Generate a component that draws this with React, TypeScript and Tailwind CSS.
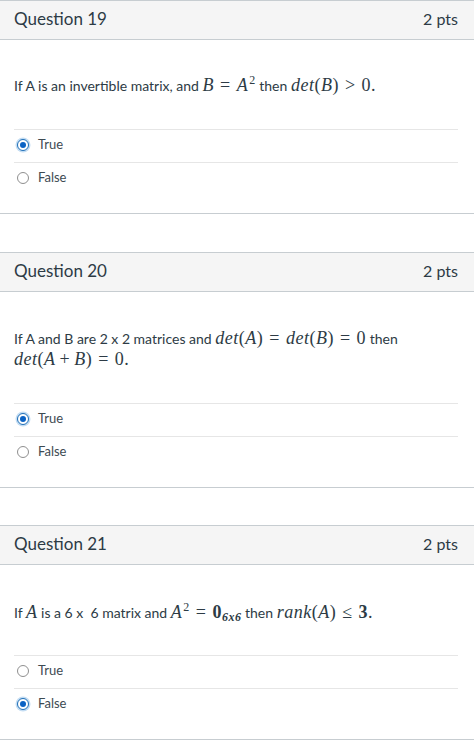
import type { ReactNode } from 'react';

type Answer = { label: string; checked: boolean };

function Radio({ checked }: { checked: boolean }) {
  if (checked) {
    return (
      <span className="flex h-[12px] w-[12px] items-center justify-center rounded-full border border-[#1f6fb8] bg-white shadow-[0_0_0_1.5px_#c4ddf3]">
        <span className="h-[6px] w-[6px] rounded-full bg-[#0b62c4]" />
      </span>
    );
  }
  return <span className="h-[12px] w-[12px] rounded-full border border-[#8f8f8f] bg-white" />;
}

function Question({
  number,
  points,
  text,
  answers,
  textClass,
}: {
  number: number;
  points: string;
  text: ReactNode;
  answers: Answer[];
  textClass: string;
}) {
  return (
    <section className="border-t border-b border-[#c7cdd1] bg-white">
      <header className="flex h-[39px] items-center justify-between border-b border-[#c7cdd1] bg-[#f5f5f5] pl-[14px] pr-[16px] pb-[2px]">
        <h2 className="text-[17px] text-[#2d3b45]">Question {number}</h2>
        <span className="text-[16px] text-[#2d3b45]">{points}</span>
      </header>
      <div className="pl-[14px] pr-[16px] pb-[18px]">
        <div className={`text-[14px] text-[#2d3b45] ${textClass}`}>{text}</div>
        <div>
          {answers.map((a) => (
            <div
              key={a.label}
              className="flex h-[33px] items-center gap-[9px] border-t border-[#e6e6e6] pb-[3px] pl-[3px]"
            >
              <Radio checked={a.checked} />
              <span className="text-[13px] text-[#3d4a52]">{a.label}</span>
            </div>
          ))}
        </div>
      </div>
    </section>
  );
}

const serif =
  "font-['Liberation_Serif','Times_New_Roman',serif] text-[18px] leading-[14px] tracking-[0.5px] whitespace-nowrap";

function I({ children }: { children: ReactNode }) {
  return <span className="italic">{children}</span>;
}

function Rel({ children }: { children: ReactNode }) {
  return <span className="mx-[6px]">{children}</span>;
}

function Sup({ children }: { children: ReactNode }) {
  return <span className="relative -top-[7px] ml-[1px] text-[12px]">{children}</span>;
}

export default function App() {
  return (
    <div className="min-h-screen bg-white font-['Lato','Liberation_Sans',sans-serif]">
      <Question
        number={19}
        points="2 pts"
        textClass="leading-[20px] pt-[36px] pb-[33px]"
        text={
          <>
            If A is an invertible matrix, and{' '}
            <span className={serif}>
              <I>B</I>
              <Rel>=</Rel>
              <I>A</I>
              <Sup>2</Sup>
            </span>{' '}
            then{' '}
            <span className={serif}>
              <I>det</I>(<I>B</I>)<Rel>&gt;</Rel>0.
            </span>
          </>
        }
        answers={[
          { label: 'True', checked: true },
          { label: 'False', checked: false },
        ]}
      />
      <div className="h-[38px]" />
      <Question
        number={20}
        points="2 pts"
        textClass="leading-[21px] pt-[36px] pb-[33px]"
        text={
          <>
            If A and B are 2 x 2 matrices and{' '}
            <span className={serif}>
              <I>det</I>(<I>A</I>)<Rel>=</Rel>
              <I>det</I>(<I>B</I>)<Rel>=</Rel>0
            </span>{' '}
            then
            <br />
            <span className={serif}>
              <I>det</I>(<I>A</I>
              <span className="mx-[4px]">+</span>
              <I>B</I>)<Rel>=</Rel>0.
            </span>
          </>
        }
        answers={[
          { label: 'True', checked: true },
          { label: 'False', checked: false },
        ]}
      />
      <div className="h-[37px]" />
      <Question
        number={21}
        points="2 pts"
        textClass="leading-[20px] pt-[38px] pb-[32px]"
        text={
          <>
            If{' '}
            <span className={serif}>
              <I>A</I>
            </span>{' '}
            is a 6 x &nbsp;6 matrix and{' '}
            <span className={serif}>
              <I>A</I>
              <Sup>2</Sup>
              <Rel>=</Rel>
              <span className="font-bold">0</span>
              <span className="relative top-[3px] text-[12px] font-bold italic">6x6</span>
            </span>{' '}
            then{' '}
            <span className={serif}>
              <I>rank</I>(<I>A</I>)<Rel>≤</Rel>
              <span className="font-bold">3</span>.
            </span>
          </>
        }
        answers={[
          { label: 'True', checked: false },
          { label: 'False', checked: true },
        ]}
      />
    </div>
  );
}
